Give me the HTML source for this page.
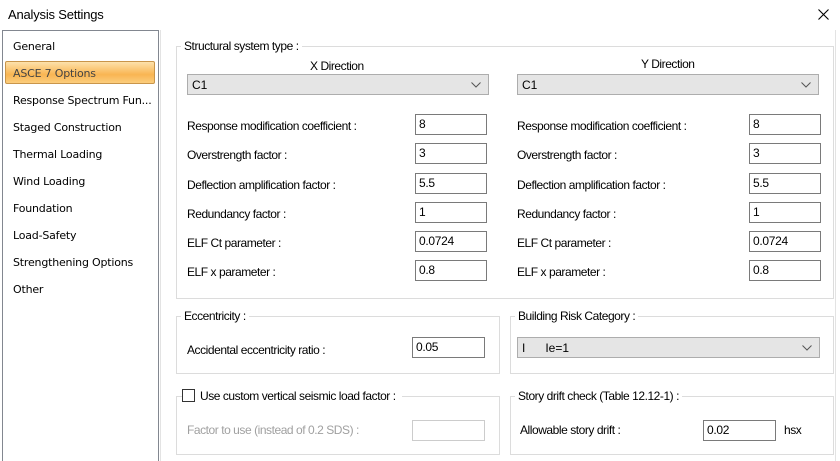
<!DOCTYPE html>
<html><head><style>
*{box-sizing:border-box;margin:0;padding:0}
body{width:840px;height:461px;background:#fff;position:relative;overflow:hidden;font-family:"Liberation Sans",sans-serif;font-size:12px;color:#000}
.a{position:absolute;white-space:nowrap}
.t{letter-spacing:-0.45px}
.g{position:absolute;border:1px solid #dcdcdc}
.gl{position:absolute;background:#fff;padding:0 3px 0 3px;letter-spacing:-0.45px;line-height:14px}
.in{position:absolute;border:1px solid #7a7a7a;background:#fff;height:21px;padding:2px 0 0 3px;letter-spacing:-0.3px}
.sel{position:absolute;border:1px solid #adadad;background:#e5e5e5;height:21px;padding:3px 0 0 4px}
.sel svg{position:absolute;right:7px;top:7px}
.nav{position:absolute;left:13px;font-family:"DejaVu Sans",sans-serif;font-size:11px;letter-spacing:-0.2px}
</style></head><body>
<div class="a" style="left:8px;top:7px;font-size:13px;letter-spacing:-0.2px">Analysis Settings</div>
<svg class="a" style="left:818px;top:9px" width="11" height="11"><path d="M0.5 0.5L10.5 10.5M10.5 0.5L0.5 10.5" stroke="#000" stroke-width="1.1"/></svg>
<div class="a" style="left:2px;top:30px;width:157px;height:431px;border:1px solid #828790;border-bottom:none"></div>
<div class="a" style="left:160px;top:30px;width:1px;height:431px;background:#e3e3e3"></div>
<div class="a" style="left:5px;top:61px;width:150px;height:23px;border:1px solid #c9954a;border-radius:2px;background:linear-gradient(#fde1ab,#f9b552 60%,#fbcd7c)"></div>
<div class="nav" style="top:40px">General</div>
<div class="nav" style="top:67px;color:#444">ASCE 7 Options</div>
<div class="nav" style="top:94px">Response Spectrum Fun...</div>
<div class="nav" style="top:121px">Staged Construction</div>
<div class="nav" style="top:148px">Thermal Loading</div>
<div class="nav" style="top:175px">Wind Loading</div>
<div class="nav" style="top:202px">Foundation</div>
<div class="nav" style="top:229px">Load-Safety</div>
<div class="nav" style="top:256px">Strengthening Options</div>
<div class="nav" style="top:283px">Other</div>
<div class="a" style="left:835px;top:30px;width:1px;height:431px;background:#e3e3e3"></div>

<div class="g" style="left:176px;top:46px;width:658px;height:253px"></div>
<div class="gl" style="left:181px;top:39px">Structural system type :</div>
<div class="a t" style="left:310px;top:59px">X Direction</div>
<div class="a t" style="left:641px;top:57px">Y Direction</div>
<div class="sel" style="left:187px;top:74px;width:302px">C1<svg width="10" height="6"><path d="M0.5 0.5L5 5L9.5 0.5" fill="none" stroke="#555"/></svg></div>
<div class="sel" style="left:517px;top:74px;width:302px">C1<svg width="10" height="6"><path d="M0.5 0.5L5 5L9.5 0.5" fill="none" stroke="#555"/></svg></div>

<div class="a t" style="left:187px;top:119px">Response modification coefficient :</div>
<div class="a t" style="left:187px;top:148px">Overstrength factor :</div>
<div class="a t" style="left:187px;top:178px">Deflection amplification factor :</div>
<div class="a t" style="left:187px;top:207px">Redundancy factor :</div>
<div class="a t" style="left:187px;top:236px">ELF Ct parameter :</div>
<div class="a t" style="left:187px;top:265px">ELF x parameter :</div>
<div class="in" style="left:415px;top:114px;width:72px">8</div>
<div class="in" style="left:415px;top:143px;width:72px">3</div>
<div class="in" style="left:415px;top:173px;width:72px">5.5</div>
<div class="in" style="left:415px;top:202px;width:72px">1</div>
<div class="in" style="left:415px;top:231px;width:72px">0.0724</div>
<div class="in" style="left:415px;top:260px;width:72px">0.8</div>

<div class="a t" style="left:517px;top:119px">Response modification coefficient :</div>
<div class="a t" style="left:517px;top:148px">Overstrength factor :</div>
<div class="a t" style="left:517px;top:178px">Deflection amplification factor :</div>
<div class="a t" style="left:517px;top:207px">Redundancy factor :</div>
<div class="a t" style="left:517px;top:236px">ELF Ct parameter :</div>
<div class="a t" style="left:517px;top:265px">ELF x parameter :</div>
<div class="in" style="left:749px;top:114px;width:72px">8</div>
<div class="in" style="left:749px;top:143px;width:72px">3</div>
<div class="in" style="left:749px;top:173px;width:72px">5.5</div>
<div class="in" style="left:749px;top:202px;width:72px">1</div>
<div class="in" style="left:749px;top:231px;width:72px">0.0724</div>
<div class="in" style="left:749px;top:260px;width:72px">0.8</div>

<div class="g" style="left:176px;top:316px;width:324px;height:58px"></div>
<div class="gl" style="left:181px;top:309px">Eccentricity :</div>
<div class="a t" style="left:187px;top:343px">Accidental eccentricity ratio :</div>
<div class="in" style="left:412px;top:337px;width:73px">0.05</div>

<div class="g" style="left:510px;top:316px;width:324px;height:58px"></div>
<div class="gl" style="left:515px;top:309px">Building Risk Category :</div>
<div class="sel" style="left:517px;top:337px;width:303px">I &nbsp;&nbsp;&nbsp;&nbsp; Ie=1<svg width="10" height="6"><path d="M0.5 0.5L5 5L9.5 0.5" fill="none" stroke="#555"/></svg></div>

<div class="g" style="left:176px;top:396px;width:324px;height:59px"></div>
<div class="gl" style="left:182px;top:389px;padding-left:0;padding-right:6px"><span style="display:inline-block;width:13px;height:13px;border:1px solid #333;vertical-align:-2px;margin-right:5px"></span>Use custom vertical seismic load factor :</div>
<div class="a t" style="left:187px;top:423px;color:#a0a0a0">Factor to use (instead of 0.2 SDS) :</div>
<div class="in" style="left:412px;top:420px;width:73px;border-color:#ccc"></div>

<div class="g" style="left:510px;top:396px;width:324px;height:59px"></div>
<div class="gl" style="left:515px;top:389px">Story drift check (Table 12.12-1) :</div>
<div class="a t" style="left:520px;top:423px">Allowable story drift :</div>
<div class="in" style="left:703px;top:420px;width:73px">0.02</div>
<div class="a t" style="left:784px;top:423px">hsx</div>
</body></html>
